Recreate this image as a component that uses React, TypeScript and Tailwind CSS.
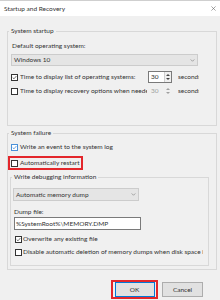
import type { ReactNode } from 'react'

function Check({ checked = false, focus = false }: { checked?: boolean; focus?: boolean }) {
  return (
    <span
      className={`flex h-[7px] w-[7px] shrink-0 items-center justify-center border bg-white ${
        focus ? 'border-[#4a90d9]' : 'border-[#333333]'
      }`}
    >
      {checked && (
        <svg viewBox="0 0 6 6" className="h-[5px] w-[5px]">
          <polyline
            points="0.8,3 2.4,4.6 5.3,1.2"
            fill="none"
            stroke={focus ? '#2f7bd0' : '#333333'}
            strokeWidth="0.8"
          />
        </svg>
      )}
    </span>
  )
}

function Chevron() {
  return (
    <svg viewBox="0 0 6 4" className="h-[3px] w-[5px]">
      <polyline points="0.6,0.6 3,3 5.4,0.6" fill="none" stroke="#777" strokeWidth="0.8" />
    </svg>
  )
}

function Group({ label, className, children }: { label: string; className: string; children: ReactNode }) {
  return (
    <div className={`relative border border-[#d8d8d8] ${className}`}>
      <span className="absolute -top-[5px] left-[1px] bg-[#f0f0f0] px-[2px] leading-[8px]">{label}</span>
      {children}
    </div>
  )
}

function Spin({ disabled = false }: { disabled?: boolean }) {
  return (
    <div
      className={`ml-[1px] flex h-[12px] w-[24px] border ${
        disabled ? 'border-transparent text-[#a0a0a0]' : 'border-[#7a7a7a] bg-white'
      }`}
    >
      <span className="flex-1 pl-[2px] leading-[10px]">30</span>
      <div
        className={`flex w-[7px] flex-col items-center justify-center gap-[2px] ${
          disabled ? '' : 'border-l border-[#cfcfcf] bg-[#f0f0f0]'
        }`}
      >
        <svg viewBox="0 0 4 2" className="h-[2px] w-[4px]">
          <polygon points="0,2 2,0 4,2" fill={disabled ? '#a0a0a0' : '#444'} />
        </svg>
        <svg viewBox="0 0 4 2" className="h-[2px] w-[4px]">
          <polygon points="0,0 4,0 2,2" fill={disabled ? '#a0a0a0' : '#444'} />
        </svg>
      </div>
    </div>
  )
}

export default function App() {
  return (
    <div className="h-[300px] w-[220px] overflow-hidden bg-[#f0f0f0] font-['Lato','Liberation_Sans',sans-serif] text-[6.5px] leading-[8px] text-[#333333]">
      {/* title bar */}
      <div className="flex h-[16px] items-center justify-between border-t border-[#cfcfcf] bg-white pl-[4px] pr-[4px]">
        <span>Startup and Recovery</span>
        <svg viewBox="0 0 6 6" className="h-[5px] w-[5px]">
          <path d="M0.5 0.5 L5.5 5.5 M5.5 0.5 L0.5 5.5" stroke="#666" strokeWidth="0.7" />
        </svg>
      </div>

      {/* system startup */}
      <Group label="System startup" className="ml-[7px] mt-[15px] h-[95px] w-[210px] pl-[3px] pt-[10px]">
        <div className="pl-[1px]">Default operating system:</div>
        <div className="mt-[4px] flex h-[12px] w-[187px] items-center justify-between border border-[#cccccc] bg-[#e5e5e5] px-[2px]">
          <span>Windows 10</span>
          <Chevron />
        </div>
        <div className="mt-[5px] flex h-[12px] items-center">
          <Check checked />
          <span className="ml-[2px] w-[127px] overflow-hidden whitespace-nowrap">
            Time to display list of operating systems:
          </span>
          <Spin />
          <span className="ml-[6px] w-[21px] overflow-hidden whitespace-nowrap">seconds</span>
        </div>
        <div className="mt-[2px] flex h-[12px] items-center">
          <Check />
          <span className="ml-[2px] w-[127px] overflow-hidden whitespace-nowrap">
            Time to display recovery options when needed:
          </span>
          <Spin disabled />
          <span className="ml-[6px] w-[21px] overflow-hidden whitespace-nowrap">seconds</span>
        </div>
      </Group>

      {/* system failure */}
      <Group label="System failure" className="ml-[7px] mt-[7px] h-[137px] w-[210px] pt-[9px]">
        <div className="flex items-center pl-[3px]">
          <Check checked focus />
          <span className="ml-[2px]">Write an event to the system log</span>
        </div>
        <div className="mt-[5px] flex h-[14px] w-[75px] items-center border-2 border-[#e3262b] pl-[1px]">
          <Check />
          <span className="ml-[2px] whitespace-nowrap">Automatically restart</span>
        </div>

        <Group
          label="Write debugging information"
          className="ml-[2px] mt-[7px] h-[89px] w-[199px] pl-[2px] pt-[10px]"
        >
          <div className="flex h-[13px] w-[126px] items-center justify-between border border-[#cccccc] bg-[#e5e5e5] px-[2px]">
            <span>Automatic memory dump</span>
            <Chevron />
          </div>
          <div className="ml-[1px] mt-[7px]">Dump file:</div>
          <div className="ml-[1px] mt-[1px] flex h-[13px] w-[127px] items-center border border-[#7a7a7a] bg-white px-[1px]">
            %SystemRoot%\MEMORY.DMP
          </div>
          <div className="mt-[5px] flex items-center pl-[2px]">
            <Check checked />
            <span className="ml-[1px]">Overwrite any existing file</span>
          </div>
          <div className="mt-[5px] flex items-center pl-[2px]">
            <Check />
            <span className="ml-[1px] w-[180px] overflow-hidden whitespace-nowrap">
              Disable automatic deletion of memory dumps when disk space is low
            </span>
          </div>
        </Group>
      </Group>

      {/* buttons */}
      <div className="ml-[111px] mt-[10px] flex items-center">
        <div className="flex h-[19px] w-[47px] items-center justify-center border-2 border-[#e3262b]">
          <button className="h-[15px] w-[40px] border border-[#0078d7] bg-[#e1e1e1] text-[6.5px]">OK</button>
        </div>
        <button className="ml-[4px] h-[15px] w-[41px] border border-[#adadad] bg-[#e1e1e1] text-[6.5px]">
          Cancel
        </button>
      </div>
    </div>
  )
}
